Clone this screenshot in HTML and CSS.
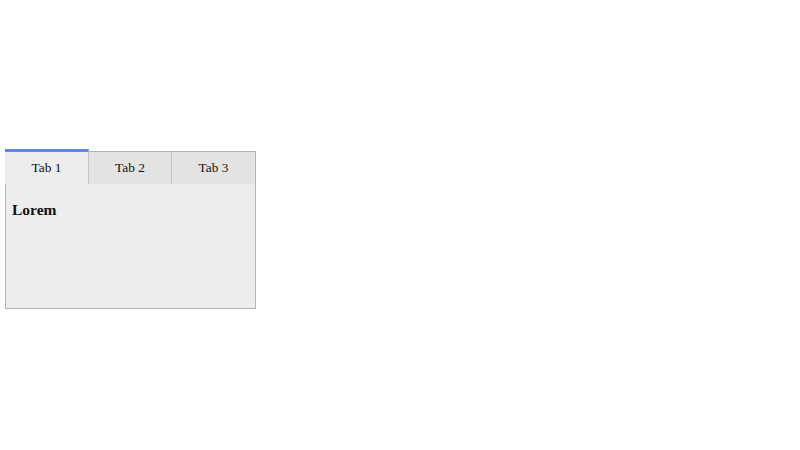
FILE: index.html
```html
<!DOCTYPE html>
<html>
<head>
<meta charset="utf-8">
<link rel="stylesheet" href="styles.css">
</head>
<body>
<div class="tabs">
  <div class="tab-bar">
    <div class="tab active">Tab 1</div>
    <div class="tab">Tab 2</div>
    <div class="tab">Tab 3</div>
  </div>
  <div class="panel">
    <h2 class="title">Lorem</h2>
  </div>
</div>
</body>
</html>
```
FILE: styles.css
```css
html, body {
  margin: 0;
  padding: 0;
  background: #ffffff;
}
body {
  padding: 151px 0 0 5px;
  font-family: "Liberation Serif", "Times New Roman", serif;
  color: #111;
}
.tabs {
  box-sizing: border-box;
  width: 251px;
  height: 158px;
  border: 1px solid #b4b4b4;
  background: #ededed;
  display: flex;
  flex-direction: column;
}
.tab-bar {
  display: grid;
  grid-template-columns: 1fr 1fr 1fr;
  height: 32px;
}
.tab {
  display: flex;
  align-items: center;
  justify-content: center;
  font-size: 13.33px;
  background: #e3e3e3;
  border-right: 1px solid #c4c4c4;
  padding-bottom: 1px;
}
.tab:last-child {
  border-right: none;
}
.tab.active {
  background: #ededed;
  border-top: 3px solid #5b8bdb;
  margin-top: -3px;
  margin-left: -1px;
  padding-bottom: 0;
}
.panel {
  padding: 0 6px;
}
.title {
  margin: 17px 0 0;
  font-size: 15.5px;
  font-weight: bold;
}
```
